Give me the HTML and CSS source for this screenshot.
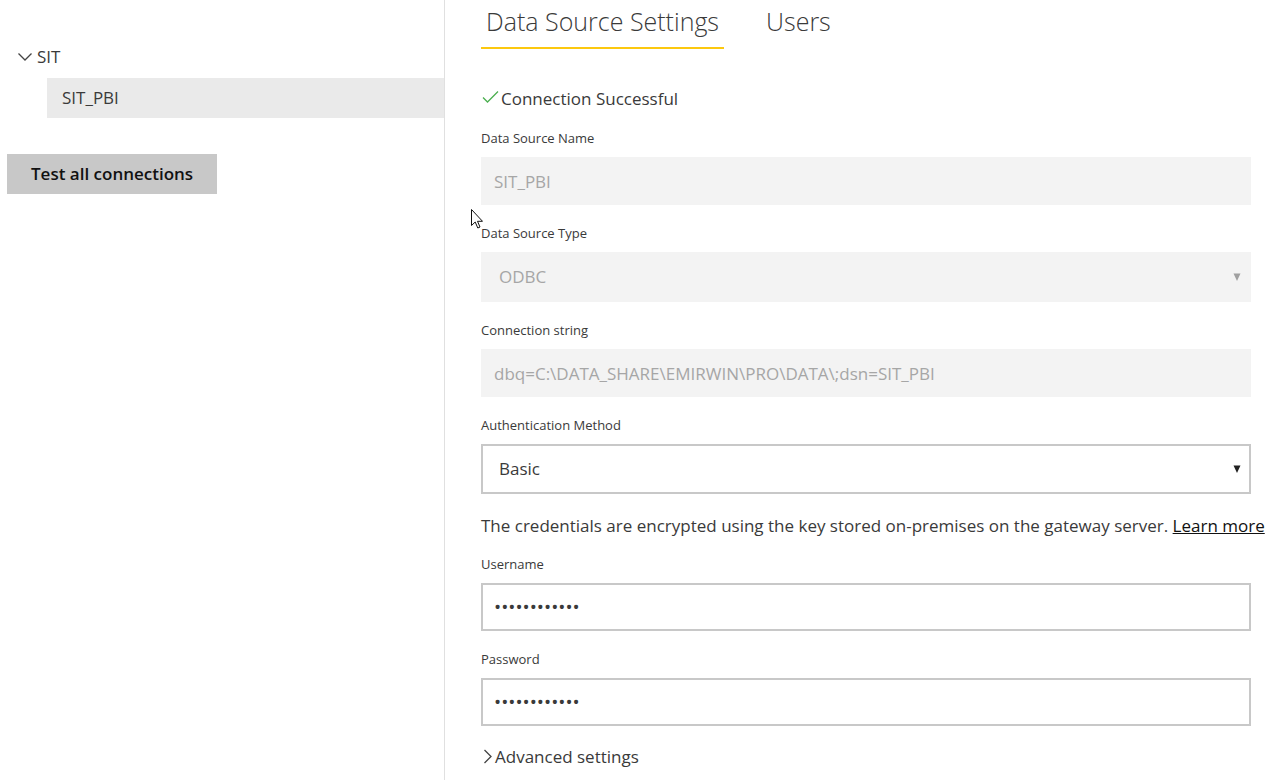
FILE: index.html
```html
<!DOCTYPE html>
<html lang="en">
<head>
<meta charset="utf-8">
<meta name="viewport" content="width=device-width, initial-scale=1">
<title>Data Source Settings</title>
<link rel="stylesheet" href="styles.css">
</head>
<body>
<div class="layout">
  <aside class="sidebar">
    <button class="tree-parent" type="button" aria-expanded="true">
      <svg class="chevron-down" viewBox="0 0 16 10" aria-hidden="true"><path d="M1.500 1.500 8 8l6.500-6.500"/></svg>
      <span>SIT</span>
    </button>
    <button class="tree-child" type="button">SIT_PBI</button>
    <button class="test-button" type="button">Test all connections</button>
  </aside>
  <main class="content">
    <nav class="tabs">
      <a class="tab tab-active" href="#settings">Data Source Settings</a>
      <a class="tab" href="#users">Users</a>
    </nav>
    <form class="form" id="settings">
      <p class="status">
        <svg class="check" viewBox="0 0 18 14" aria-hidden="true"><path d="M2 7.500 6.500 12 17 1.500"/></svg>
        <span>Connection Successful</span>
      </p>
      <div class="field">
        <label class="label" for="name">Data Source Name</label>
        <input class="box" id="name" type="text" value="SIT_PBI" disabled>
      </div>
      <div class="field">
        <label class="label" for="type">Data Source Type</label>
        <div class="select-wrap">
          <select class="box select" id="type" disabled><option>ODBC</option></select>
          <svg class="arrow arrow-disabled" viewBox="0 0 8 8" aria-hidden="true"><path d="M0.500 0.500h7L4 8z"/></svg>
        </div>
      </div>
      <div class="field">
        <label class="label" for="connection">Connection string</label>
        <input class="box" id="connection" type="text" value="dbq=C:\DATA_SHARE\EMIRWIN\PRO\DATA\;dsn=SIT_PBI" disabled>
      </div>
      <div class="field">
        <label class="label" for="auth">Authentication Method</label>
        <div class="select-wrap">
          <select class="box select" id="auth"><option>Basic</option></select>
          <svg class="arrow" viewBox="0 0 8 8" aria-hidden="true"><path d="M0.500 0.500h7L4 8z"/></svg>
        </div>
      </div>
      <p class="note">The credentials are encrypted using the key stored on-premises on the gateway server. <a class="link" href="#learn">Learn more</a></p>
      <div class="field">
        <label class="label" for="username">Username</label>
        <input class="box secret" id="username" type="password" value="serviceadmin">
      </div>
      <div class="field">
        <label class="label" for="password">Password</label>
        <input class="box secret" id="password" type="password" value="secretsecret">
      </div>
      <button class="advanced" type="button" aria-expanded="false">
        <svg class="chevron-right" viewBox="0 0 10 16" aria-hidden="true"><path d="M1.500 1 8 7.500 1.500 14"/></svg>
        <span>Advanced settings</span>
      </button>
    </form>
  </main>
</div>
<svg class="cursor" viewBox="0 0 12 20" aria-hidden="true"><path d="M.5 .5v16l3.700-3.500 2.600 6 2.200-1-2.500-5.700h5z"/></svg>
</body>
</html>
```
FILE: styles.css
```css
* {
  box-sizing: border-box;
}

body {
  margin: 0;
  background: #fff;
  color: #3a3a3a;
  font-family: "Open Sans", "Noto Sans", sans-serif;
  font-size: 17px;
  line-height: 24px;
}

button,
input,
select {
  border: 0;
  border-radius: 0;
  color: inherit;
  font: inherit;
}

button {
  padding: 0;
  background: none;
  cursor: pointer;
}

p {
  margin: 0;
}

svg {
  flex: none;
  fill: none;
  stroke: #444;
}

.layout {
  display: flex;
  min-height: 100vh;
}

.sidebar {
  display: flex;
  flex: 0 0 445px;
  flex-direction: column;
  align-items: flex-start;
  padding-top: 45px;
  border-right: 1px solid #e0e0e0;
}

.tree-parent {
  display: flex;
  align-items: center;
  gap: 4px;
  margin-left: 17px;
}

.chevron-down {
  width: 16px;
  height: 10px;
  stroke-width: 1.3;
}

.tree-child {
  align-self: stretch;
  height: 40px;
  margin: 9px 0 36px 47px;
  padding-left: 15px;
  background: #eaeaea;
  text-align: left;
}

.test-button {
  height: 40px;
  margin-left: 7px;
  padding: 0 24px;
  background: #c8c8c8;
  color: #111;
  font-weight: 600;
}

.content {
  flex: 1;
  min-width: 0;
  padding: 0 29px 11px 36px;
}

.tabs {
  display: flex;
  gap: 37px;
  font-size: 25px;
  font-weight: 300;
  line-height: 42px;
}

.tab {
  padding: 0 5px 5px;
  border-bottom: 2px solid transparent;
  color: #3a3a3a;
  text-decoration: none;
}

.tab-active {
  border-color: #fcc80f;
}

.status {
  display: flex;
  align-items: center;
  gap: 2px;
  margin: 38px 0 17px;
}

.check {
  width: 18px;
  height: 14px;
  margin-bottom: 4px;
  stroke: #4caf50;
  stroke-width: 1.3;
}

.field + .field {
  margin-top: 18px;
}

.label {
  display: block;
  margin-bottom: 9px;
  font-size: 13px;
  line-height: 20px;
}

.box {
  display: block;
  width: 100%;
  height: 48px;
  padding: 0 11px;
  border: 2px solid #c8c8c8;
  background: #fff;
}

.box:disabled {
  border-color: #f3f3f3;
  background: #f3f3f3;
  color: #a6a6a6;
  opacity: 1;
}

.secret {
  font-size: 19px;
}

.select-wrap {
  display: grid;
  align-items: center;
}

.select {
  grid-area: 1 / 1;
  height: 50px;
  padding: 0 16px;
  appearance: none;
}

.arrow {
  grid-area: 1 / 1;
  justify-self: end;
  width: 8px;
  height: 8px;
  margin-right: 10px;
  fill: #222;
  stroke: none;
  pointer-events: none;
}

.arrow-disabled {
  fill: #a0a0a0;
}

.note {
  margin: 20px 0 16px;
  white-space: nowrap;
}

.link {
  color: #111;
}

.advanced {
  display: flex;
  align-items: center;
  gap: 2px;
  margin: 19px 0 0 2px;
}

.chevron-right {
  width: 10px;
  height: 16px;
  stroke-width: 1.3;
}

.cursor {
  position: absolute;
  top: 209px;
  left: 471px;
  width: 12px;
  height: 20px;
  fill: #fff;
  stroke: #111;
  pointer-events: none;
}
```
